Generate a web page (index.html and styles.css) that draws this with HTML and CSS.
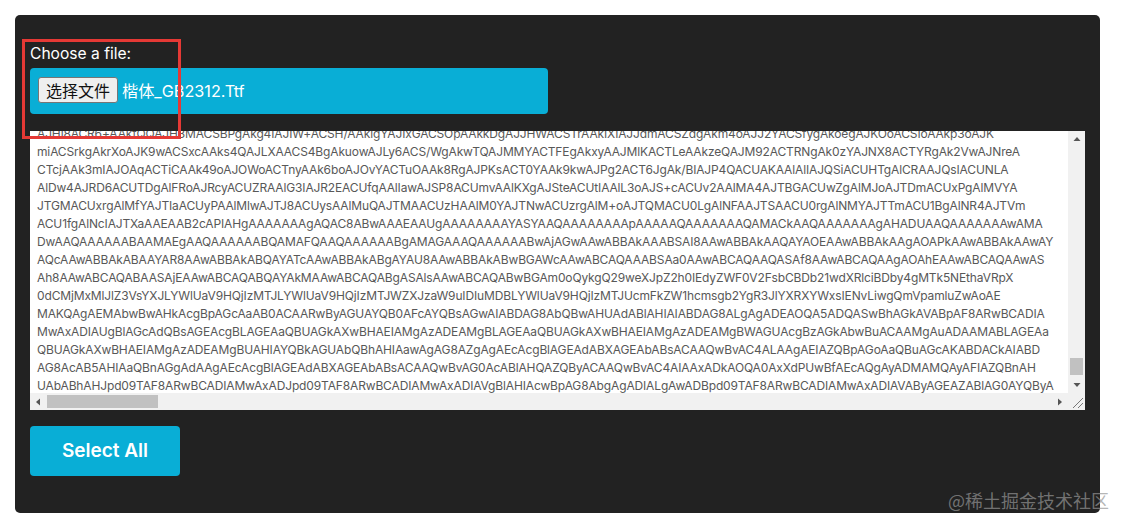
FILE: index.html
```html
<!DOCTYPE html>
<html lang="zh">
<head>
<meta charset="utf-8">
<title>Choose a file</title>
<link rel="stylesheet" href="styles.css">
</head>
<body>
<main class="panel">
  <div class="label">Choose a file:</div>
  <div class="file-bar">
    <button class="file-btn" type="button">选择文件</button>
    <span class="file-name">楷体_GB2312.Ttf</span>
  </div>
  <div class="area">
    <div class="area-main">
      <div class="text">
        <div class="line">AJHl8ACR6+AAkfQQAJH3MACSBPgAkg4IAJIW+ACSH/AAkigYAJIxGACSOpAAkkDgAJJHWACSTrAAkIXIAJJdmACSZdgAkm4oAJJ2YACSfygAkoegAJKOoACSIoAAkp3oAJK</div>
        <div class="line">miACSrkgAkrXoAJK9wACSxcAAks4QAJLXAACS4BgAkuowAJLy6ACS/WgAkwTQAJMMYACTFEgAkxyAAJMlKACTLeAAkzeQAJM92ACTRNgAk0zYAJNX8ACTYRgAk2VwAJNreA</div>
        <div class="line">CTcjAAk3mIAJOAqACTiCAAk49oAJOWoACTnyAAk6boAJOvYACTuOAAk8RgAJPKsACT0YAAk9kwAJPg2ACT6JgAk/BIAJP4QACUAKAAlAlIAJQSiACUHTgAlCRAAJQsIACUNLA</div>
        <div class="line">AlDw4AJRD6ACUTDgAlFRoAJRcyACUZRAAlG3IAJR2EACUfqAAlIawAJSP8ACUmvAAlKXgAJSteACUtIAAlL3oAJS+cACUv2AAlMA4AJTBGACUwZgAlMJoAJTDmACUxPgAlMVYA</div>
        <div class="line">JTGMACUxrgAlMfYAJTIaACUyPAAlMlwAJTJ8ACUysAAlMuQAJTMAACUzHAAlM0YAJTNwACUzrgAlM+oAJTQMACU0LgAlNFAAJTSAACU0rgAlNMYAJTTmACU1BgAlNR4AJTVm</div>
        <div class="line">ACU1fgAlNcIAJTXaAAEAAB2cAPIAHgAAAAAAAgAQAC8ABwAAAEAAUgAAAAAAAAYASYAAQAAAAAAAApAAAAAQAAAAAAAQAMACkAAQAAAAAAAgAHADUAAQAAAAAAAwAMA</div>
        <div class="line">DwAAQAAAAAABAAMAEgAAQAAAAAABQAMAFQAAQAAAAAABgAMAGAAAQAAAAAABwAjAGwAAwABBAkAAABSAI8AAwABBAkAAQAYAOEAAwABBAkAAgAOAPkAAwABBAkAAwAY</div>
        <div class="line">AQcAAwABBAkABAAYAR8AAwABBAkABQAYATcAAwABBAkABgAYAU8AAwABBAkABwBGAWcAAwABCAQAAABSAa0AAwABCAQAAQASAf8AAwABCAQAAgAOAhEAAwABCAQAAwAS</div>
        <div class="line">Ah8AAwABCAQABAASAjEAAwABCAQABQAYAkMAAwABCAQABgASAlsAAwABCAQABwBGAm0oQykgQ29weXJpZ2h0IEdyZWF0V2FsbCBDb21wdXRlciBDby4gMTk5NEthaVRpX</div>
        <div class="line">0dCMjMxMlJlZ3VsYXJLYWlUaV9HQjIzMTJLYWlUaV9HQjIzMTJWZXJzaW9uIDIuMDBLYWlUaV9HQjIzMTJUcmFkZW1hcmsgb2YgR3JlYXRXYWxsIENvLiwgQmVpamluZwAoAE</div>
        <div class="line">MAKQAgAEMAbwBwAHkAcgBpAGcAaAB0ACAARwByAGUAYQB0AFcAYQBsAGwAIABDAG8AbQBwAHUAdABlAHIAIABDAG8ALgAgADEAOQA5ADQASwBhAGkAVABpAF8ARwBCADIA</div>
        <div class="line">MwAxADIAUgBlAGcAdQBsAGEAcgBLAGEAaQBUAGkAXwBHAEIAMgAzADEAMgBLAGEAaQBUAGkAXwBHAEIAMgAzADEAMgBWAGUAcgBzAGkAbwBuACAAMgAuADAAMABLAGEAa</div>
        <div class="line">QBUAGkAXwBHAEIAMgAzADEAMgBUAHIAYQBkAGUAbQBhAHIAawAgAG8AZgAgAEcAcgBlAGEAdABXAGEAbABsACAAQwBvAC4ALAAgAEIAZQBpAGoAaQBuAGcAKABDACkAIABD</div>
        <div class="line">AG8AcAB5AHIAaQBnAGgAdAAgAEcAcgBlAGEAdABXAGEAbABsACAAQwBvAG0AcABlAHQAZQByACAAQwBvAC4AIAAxADkAOQA0AxXdPUwBfAEcAQgAyADMAMQAyAFIAZQBnAH</div>
        <div class="line">UAbABhAHJpd09TAF8ARwBCADIAMwAxADJpd09TAF8ARwBCADIAMwAxADIAVgBlAHIAcwBpAG8AbgAgADIALgAwADBpd09TAF8ARwBCADIAMwAxADIAVAByAGEAZABlAG0AYQByA</div>
      </div>
      <div class="vscroll">
        <svg class="arrow" viewBox="0 0 8 6" width="8" height="6"><path d="M4 1 L7.5 5 H0.5 Z"/></svg>
        <div class="vtrack"><div class="vthumb"></div></div>
        <svg class="arrow" viewBox="0 0 8 6" width="8" height="6"><path d="M0.5 1 H7.5 L4 5 Z"/></svg>
      </div>
    </div>
    <div class="hscroll">
      <div class="hbar">
        <svg class="arrow" viewBox="0 0 6 8" width="6" height="8"><path d="M5 0.5 V7.5 L1 4 Z"/></svg>
        <div class="htrack"><div class="hthumb"></div></div>
        <svg class="arrow" viewBox="0 0 6 8" width="6" height="8"><path d="M1 0.5 L5 4 L1 7.5 Z"/></svg>
      </div>
      <div class="corner">
        <svg viewBox="0 0 17 17" width="17" height="17"><path d="M5 15 L15 5 M10 15 L15 10" stroke="#777" stroke-width="1" fill="none"/></svg>
      </div>
    </div>
  </div>
  <button class="select-all" type="button">Select All</button>
</main>
<div class="highlight"></div>
<div class="watermark">@稀土掘金技术社区</div>
</body>
</html>
```
FILE: styles.css
```css
* { box-sizing: border-box; }
html, body { margin: 0; height: 530px; overflow: hidden; background: #fff; }
body {
  position: relative;
  padding: 15px 27px 17px 15px;
  font-family: "Inter", "Noto Sans CJK SC", sans-serif;
}
.panel {
  height: 498px;
  background: #222;
  border-radius: 5px;
  padding: 26px 15px 37px;
  display: flex;
  flex-direction: column;
}
.label {
  height: 24px;
  line-height: 26px;
  font-size: 15.6px;
  color: #fff;
}
.file-bar {
  margin-top: 3px;
  height: 46px;
  width: 518px;
  background: #09aed6;
  border-radius: 4px;
  display: flex;
  align-items: center;
  padding: 0 0 3px 8px;
  gap: 4px;
}
.file-btn {
  width: 80px;
  height: 26px;
  padding: 0;
  background: #efefef;
  border: 1px solid #767676;
  border-radius: 3px;
  color: #111;
  font: 16px "Noto Sans CJK SC", sans-serif;
}
.file-name {
  color: #fff;
  font-size: 16.2px;
  font-family: "Inter", "Noto Sans CJK SC", sans-serif;
}
.area {
  margin-top: 17px;
  height: 279px;
  background: #fff;
  display: flex;
  flex-direction: column;
}
.area-main { display: flex; height: 262px; }
.text {
  flex: 1;
  min-width: 0;
  overflow: hidden;
  padding-left: 7px;
  color: #585858;
  font-size: 12px;
  letter-spacing: -0.14px;
  line-height: 18px;
}
.line:first-child { margin-top: -6px; }
.line { white-space: nowrap; height: 18px; }
.arrow { fill: #555; display: block; flex: none; }
.vscroll {
  width: 17px;
  background: #f1f1f1;
  display: flex;
  flex-direction: column;
  align-items: center;
  padding: 5px 0;
}
.vtrack { flex: 1; width: 100%; position: relative; }
.vthumb {
  position: absolute;
  left: 2px;
  right: 2px;
  bottom: 7px;
  height: 17px;
  background: #c1c1c1;
}
.hscroll { display: flex; height: 17px; }
.hbar {
  flex: 1;
  background: #f1f1f1;
  display: flex;
  align-items: center;
  padding: 0 5px;
}
.htrack { flex: 1; height: 100%; position: relative; }
.hthumb {
  position: absolute;
  top: 2px;
  bottom: 2px;
  left: 6px;
  width: 111px;
  background: #c1c1c1;
}
.corner { width: 17px; background: #f1f1f1; }
.corner svg { display: block; }
.select-all {
  margin-top: 16px;
  width: 150px;
  height: 50px;
  padding: 0 0 2px;
  border: 0;
  border-radius: 4px;
  background: #09aed6;
  color: #fff;
  font: 600 19px "Inter", sans-serif;
}
.highlight {
  position: absolute;
  left: 22px;
  top: 39px;
  width: 159px;
  height: 100px;
  border: 3px solid #e53935;
}
.watermark {
  position: absolute;
  left: 948px;
  top: 489px;
  font: 18px/22px "Noto Sans CJK SC", sans-serif;
  color: rgba(150,150,150,.7);
  white-space: nowrap;
}
```
